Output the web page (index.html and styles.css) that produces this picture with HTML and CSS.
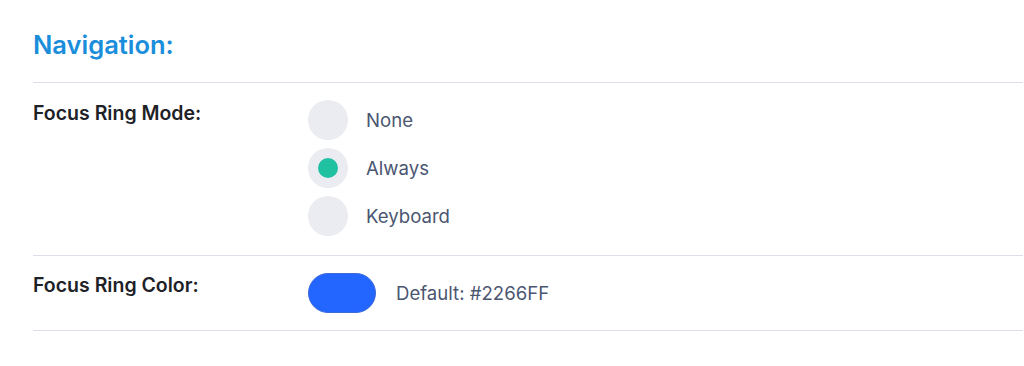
FILE: index.html
```html
<!DOCTYPE html>
<html>
<head>
<meta charset="utf-8">
<link rel="stylesheet" href="styles.css">
</head>
<body>
<div class="page">
  <h2 class="title">Navigation:</h2>
  <div class="row row-mode">
    <div class="label">Focus Ring Mode:</div>
    <div class="options">
      <div class="option"><span class="radio"></span><span class="opt-text">None</span></div>
      <div class="option"><span class="radio checked"></span><span class="opt-text">Always</span></div>
      <div class="option"><span class="radio"></span><span class="opt-text">Keyboard</span></div>
    </div>
  </div>
  <div class="row row-color">
    <div class="label">Focus Ring Color:</div>
    <div class="color-field">
      <span class="swatch"></span>
      <span class="opt-text">Default: #2266FF</span>
    </div>
  </div>
</div>
</body>
</html>
```
FILE: styles.css
```css
html, body {
  margin: 0;
  padding: 0;
  background: #ffffff;
}
body {
  font-family: Inter, "Liberation Sans", sans-serif;
}
.page {
  padding: 28px 1px 0 33px;
}
.title {
  margin: 0;
  height: 54px;
  font-size: 25.5px;
  font-weight: 600;
  color: #1b8edb;
  line-height: 34px;
  border-bottom: 1px solid #dcdfe9;
}
.row {
  display: grid;
  grid-template-columns: 275px 1fr;
  border-bottom: 1px solid #dcdfe9;
}
.row-mode {
  padding: 17px 0 19px;
}
.row-mode .label {
  padding-top: 1px;
}
.row-color {
  padding: 17px 0 17px;
}
.label {
  font-size: 19.5px;
  font-weight: 600;
  color: #1e2227;
  line-height: 24px;
}
.options {
  display: flex;
  flex-direction: column;
  gap: 8px;
}
.option {
  display: flex;
  align-items: center;
  gap: 18px;
  height: 40px;
}
.radio {
  width: 40px;
  height: 40px;
  border-radius: 50%;
  background: #ebecf2;
  display: flex;
  align-items: center;
  justify-content: center;
}
.radio.checked::after {
  content: "";
  width: 20px;
  height: 20px;
  border-radius: 50%;
  background: #1fc1a2;
}
.opt-text {
  font-size: 18.6px;
  color: #4b5671;
}
.color-field {
  display: flex;
  align-items: center;
  gap: 20px;
}
.swatch {
  width: 66px;
  height: 38px;
  border-radius: 20px;
  background: #2266ff;
  border: 1px solid #3f6bd9;
}
```
